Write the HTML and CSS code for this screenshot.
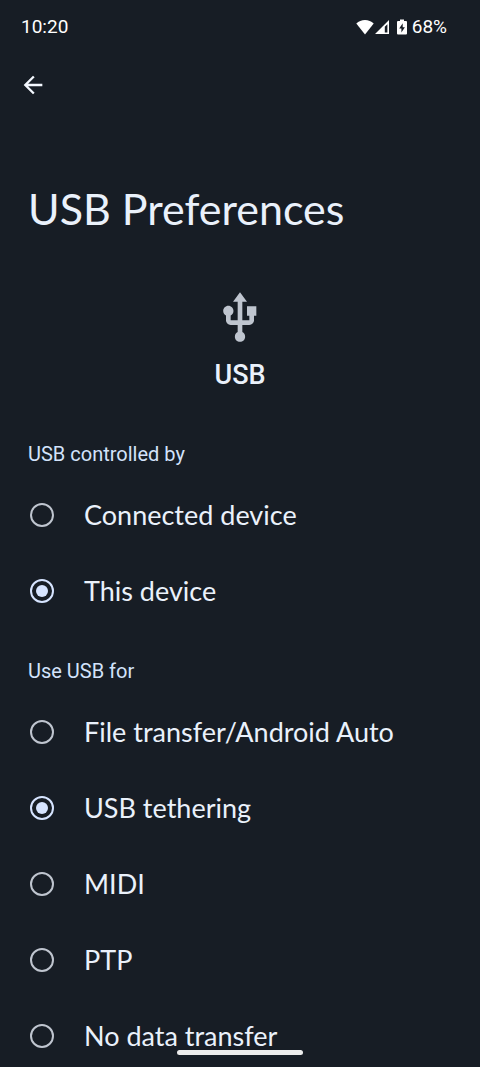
FILE: index.html
```html
<!DOCTYPE html>
<html lang="en">
<head>
<meta charset="utf-8">
<meta name="viewport" content="width=device-width, initial-scale=1">
<title>USB Preferences</title>
<link rel="stylesheet" href="styles.css">
</head>
<body>
<div class="screen">
  <header class="status-bar">
    <span>10:20</span>
    <div class="status-icons">
      <svg class="wifi" viewBox="0 0 18 16" aria-hidden="true"><path d="M9 15.500 0.300 4.500C2.600 2.200 5.700 1 9 1s6.400 1.200 8.700 3.500z"/></svg>
      <svg class="signal" viewBox="0 0 16 16" aria-hidden="true"><path fill-rule="evenodd" d="M15 1v14H1zM13.400 5.200 10.800 7.800v5.700h2.600z"/></svg>
      <svg class="battery" viewBox="0 0 10 16" aria-hidden="true"><path fill-rule="evenodd" d="M3 0.500h4V2h2q1 0 1 1v11.500q0 1-1 1H1q-1 0-1-1V3q0-1 1-1h2zM5.700 4.200 2.200 9.400h2.200v4.100l3.500-5.300H5.700z"/></svg>
      <span>68%</span>
    </div>
  </header>
  <nav class="toolbar">
    <button class="back" type="button" aria-label="Navigate up">
      <svg viewBox="0 0 24 24" aria-hidden="true"><path d="M20 11H7.830l5.590-5.590L12 4l-8 8 8 8 1.410-1.410L7.830 13H20z"/></svg>
    </button>
  </nav>
  <main>
    <h1 class="title">USB Preferences</h1>
    <div class="entity">
      <svg class="usb" viewBox="0 0 24 24" aria-hidden="true"><path d="M15 7v4h1v2h-3V5h2l-3-4-3 4h2v8H8v-2.070c.7-.37 1.200-1.080 1.200-1.930 0-1.210-.99-2.200-2.200-2.200-1.210 0-2.200.99-2.200 2.200 0 .85.5 1.560 1.200 1.930V13c0 1.110.89 2 2 2h3v3.050c-.71.37-1.200 1.100-1.200 1.950 0 1.220.99 2.200 2.200 2.200 1.210 0 2.200-.98 2.200-2.200 0-.85-.49-1.580-1.200-1.950V15h3c1.110 0 2-.89 2-2v-2h1V7h-4z"/></svg>
      <span>USB</span>
    </div>
    <fieldset class="group">
      <legend class="category">USB controlled by</legend>
      <label class="option"><input type="radio" name="role"><span>Connected device</span></label>
      <label class="option"><input type="radio" name="role" checked><span>This device</span></label>
    </fieldset>
    <fieldset class="group">
      <legend class="category">Use USB for</legend>
      <label class="option"><input type="radio" name="use"><span>File transfer/Android Auto</span></label>
      <label class="option"><input type="radio" name="use" checked><span>USB tethering</span></label>
      <label class="option"><input type="radio" name="use"><span>MIDI</span></label>
      <label class="option"><input type="radio" name="use"><span>PTP</span></label>
      <label class="option"><input type="radio" name="use"><span>No data transfer</span></label>
    </fieldset>
  </main>
  <div class="home-handle"></div>
</div>
</body>
</html>
```
FILE: styles.css
```css
* {
  box-sizing: border-box;
}

body {
  margin: 0;
  background: #171d25;
  color: #eaf1fb;
  font-family: Lato, "Open Sans", sans-serif;
}

.screen {
  height: 100vh;
  overflow: hidden auto;
  scrollbar-width: none;
}

.status-bar {
  display: flex;
  justify-content: space-between;
  align-items: center;
  padding: 15px 33px 0 21px;
  font-size: 19px;
  line-height: 24px;
  font-family: Roboto, sans-serif;
  color: #fff;
}

.status-icons {
  display: flex;
  align-items: center;
}

.status-icons svg {
  height: 16px;
  fill: #fff;
}

.wifi {
  width: 18px;
}

.signal {
  width: 16px;
}

.battery {
  width: 10px;
  margin: 0 5px 0 7px;
}

.toolbar {
  padding: 26px 13px 0;
}

.back {
  display: grid;
  place-items: center;
  width: 40px;
  height: 40px;
  padding: 0;
  border: 0;
  background: none;
}

.back svg {
  width: 28px;
  height: 28px;
  fill: #f4f8ff;
}

.title {
  margin: 0;
  padding: 76px 28px 0;
  font-size: 43px;
  font-weight: 400;
  line-height: 56px;
}

.entity {
  display: flex;
  flex-direction: column;
  align-items: center;
  padding-top: 53px;
  font-size: 27px;
  font-weight: 500;
  line-height: 32px;
  font-family: Roboto, sans-serif;
}

.usb {
  width: 56px;
  height: 56px;
  margin-bottom: 13px;
  fill: #bfc5cf;
}

.group {
  margin: 0;
  padding: 0;
  border: 0;
}

.entity + .group {
  margin-top: 21px;
}

.category {
  padding: 30px 28px 11px;
  font-size: 20px;
  line-height: 24px;
  font-family: Roboto, sans-serif;
  color: #d3e3fb;
}

.option {
  display: flex;
  align-items: center;
  gap: 30px;
  min-height: 76px;
  padding: 0 30px;
  font-size: 27px;
  line-height: 36px;
}

.option input {
  flex: none;
  appearance: none;
  display: grid;
  place-items: center;
  width: 24px;
  height: 24px;
  margin: 0;
  border: 2px solid #bfc5cf;
  border-radius: 50%;
}

.option input:checked {
  border-color: #d6e4ff;
}

.option input:checked::before {
  content: "";
  width: 12px;
  height: 12px;
  border-radius: 50%;
  background: #d6e4ff;
}

.home-handle {
  position: fixed;
  bottom: 12px;
  left: 50%;
  width: 126px;
  height: 5px;
  border-radius: 3px;
  background: #ececec;
  transform: translateX(-50%);
}
```
